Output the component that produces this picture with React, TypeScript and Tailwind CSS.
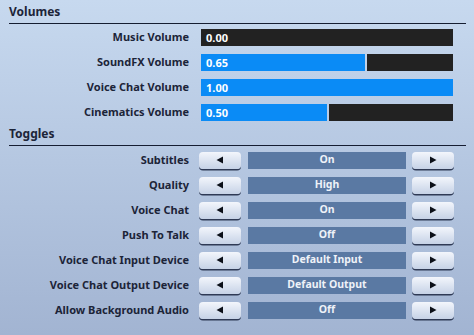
import React from "react";

const volumes = [
  { label: "Music Volume", value: 0 },
  { label: "SoundFX Volume", value: 0.65 },
  { label: "Voice Chat Volume", value: 1 },
  { label: "Cinematics Volume", value: 0.5 },
];

const toggles = [
  { label: "Subtitles", value: "On" },
  { label: "Quality", value: "High" },
  { label: "Voice Chat", value: "On" },
  { label: "Push To Talk", value: "Off" },
  { label: "Voice Chat Input Device", value: "Default Input" },
  { label: "Voice Chat Output Device", value: "Default Output" },
  { label: "Allow Background Audio", value: "Off" },
];

function Header({ title }: { title: string }) {
  return (
    <div className="pr-[8px]">
      <div className="text-[12px] font-bold leading-[16px] text-[#1c2438]">{title}</div>
      <div className="mt-[3px] h-px bg-[#151d31]" />
    </div>
  );
}

function Arrow({ dir }: { dir: "left" | "right" }) {
  return (
    <button className="flex h-[17px] w-[42px] items-center justify-center rounded-[4px] bg-gradient-to-b from-[#f3f6fc] to-[#c6d2e6] shadow-[0_1.5px_0_#2f3a55]">
      <svg width="8" height="8" viewBox="0 0 8 8">
        {dir === "left" ? (
          <polygon points="7,0.5 7,7.5 0.5,4" fill="#0b0f18" />
        ) : (
          <polygon points="1,0.5 1,7.5 7.5,4" fill="#0b0f18" />
        )}
      </svg>
    </button>
  );
}

export default function App() {
  return (
    <div
      className="h-[335px] w-[474px] overflow-hidden bg-gradient-to-b from-[#c7d9ef] to-[#a2b4d2] pl-[9px] pt-[4px]"
      style={{ fontFamily: '"Noto Sans", "Open Sans", sans-serif' }}
    >
      <Header title="Volumes" />
      <div className="mt-[5px] flex flex-col gap-[8px]">
        {volumes.map((v) => (
          <div key={v.label} className="flex items-center">
            <div className="w-[180px] text-right text-[11px] font-bold text-[#1c2438]">
              {v.label}
            </div>
            <div className="ml-[12px] flex h-[17px] w-[252px] gap-[2px]">
              {v.value > 0 ? (
                <div
                  className="relative h-full bg-[#0a8bf6]"
                  style={{ width: `${v.value * 100}%` }}
                />
              ) : null}
              {v.value < 1 ? <div className="h-full flex-1 bg-[#222222]" /> : null}
              <span className="pointer-events-none absolute ml-[5px] text-[11px] font-bold leading-[17px] text-white">
                {v.value.toFixed(2)}
              </span>
            </div>
          </div>
        ))}
      </div>

      <div className="mt-[5px]">
        <Header title="Toggles" />
      </div>
      <div className="mt-[5px] flex flex-col gap-[7px]">
        {toggles.map((t) => (
          <div key={t.label} className="flex h-[18px] items-center">
            <div className="w-[180px] text-right text-[11px] font-bold text-[#1c2438]">
              {t.label}
            </div>
            <div className="ml-[10px] flex items-center">
              <Arrow dir="left" />
              <div className="ml-[7px] flex h-[17px] w-[158px] items-center justify-center bg-[#5a79a3] text-[10.5px] font-bold text-[#eef2f8]">
                {t.value}
              </div>
              <div className="ml-[6px]">
                <Arrow dir="right" />
              </div>
            </div>
          </div>
        ))}
      </div>
    </div>
  );
}
